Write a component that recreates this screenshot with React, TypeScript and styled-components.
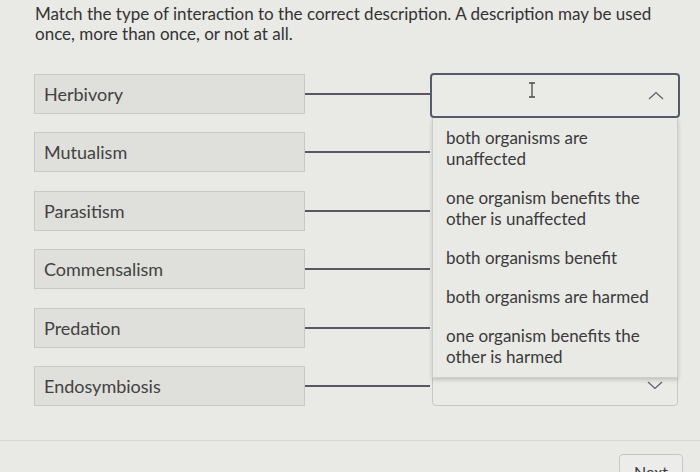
import React from "react";
import styled, { createGlobalStyle } from "styled-components";

const GlobalStyle = createGlobalStyle`
  html, body {
    margin: 0;
    padding: 0;
    background: #e9e9e6;
  }
  body {
    font-family: Lato, "Open Sans", sans-serif;
    color: #363636;
  }
`;

const Page = styled.div`
  width: 700px;
  height: 472px;
  overflow: hidden;
  background: #e9e9e6;
  display: flex;
  flex-direction: column;
`;

const Prompt = styled.p`
  margin: 0;
  padding: 4px 40px 0 35px;
  font-size: 17px;
  line-height: 19.5px;
  color: #333;
`;

const Rows = styled.div`
  display: flex;
  flex-direction: column;
  gap: 18.4px;
  margin-top: 31px;
  padding-left: 34px;
`;

const Row = styled.div`
  display: flex;
  align-items: center;
  height: 40px;
`;

const Term = styled.div`
  box-sizing: border-box;
  width: 271px;
  height: 40px;
  display: flex;
  align-items: center;
  padding-left: 9px;
  background: #dfdfdc;
  border: 1px solid #c8c8c5;
  font-size: 18px;
  color: #424242;
`;

const Connector = styled.div`
  width: 125px;
  height: 2px;
  background: #5b5666;
`;

const SelectWrap = styled.div`
  position: relative;
  width: 250px;
  height: 40px;
  display: flex;
  align-items: flex-start;
`;

const SelectBox = styled.div<{ $open?: boolean }>`
  box-sizing: border-box;
  flex-shrink: 0;
  width: ${(p) => (p.$open ? "250px" : "246px")};
  margin: ${(p) => (p.$open ? "-1px 0 0" : "0 0 0 2px")};
  height: ${(p) => (p.$open ? "45px" : "40px")};
  border: ${(p) => (p.$open ? "2px solid #555b6b" : "1px solid #c6c6c3")};
  border-radius: 4px;
  background: #eaeae7;
  position: relative;
  display: flex;
  align-items: center;
  justify-content: flex-end;
  padding-right: 14px;
`;

const Cursor = styled.svg`
  position: absolute;
  left: 96px;
  top: 7px;
`;

const Menu = styled.ul`
  position: absolute;
  z-index: 5;
  top: 44px;
  left: 2px;
  width: 246px;
  box-sizing: border-box;
  margin: 0;
  padding: 0 0 1px;
  list-style: none;
  background: #e9e9e6;
  border: 1px solid #cdcdca;
  border-top: none;
  box-shadow: 0 2px 4px rgba(0, 0, 0, 0.18);
`;

const Option = styled.li`
  padding: 9px 20px 9px 13px;
  font-size: 17px;
  line-height: 21px;
  color: #3a3a3a;
`;

const Footer = styled.div`
  margin-top: auto;
  border-top: 1px solid #d6d6d3;
  height: 31px;
  display: flex;
  justify-content: flex-end;
  align-items: flex-start;
  padding: 0 17px 0 0;
`;

const NextButton = styled.button`
  margin-top: 13px;
  width: 64px;
  height: 34px;
  border: 1px solid #c6c6c3;
  border-radius: 4px;
  background: #ececea;
  font-family: Lato, sans-serif;
  font-size: 16px;
  color: #3a3a3a;
  padding: 7px 0 0;
  display: flex;
  justify-content: center;
  align-items: flex-start;
`;

const Chevron = ({ up }: { up?: boolean }) => (
  <svg width="16" height="9" viewBox="0 0 16 9">
    <path
      d={up ? "M1 8 L8 1.5 L15 8" : "M1 1 L8 7.5 L15 1"}
      fill="none"
      stroke="#5a5f6c"
      strokeWidth="1.2"
    />
  </svg>
);

const terms = ["Herbivory", "Mutualism", "Parasitism", "Commensalism", "Predation", "Endosymbiosis"];

const options = [
  "both organisms are unaffected",
  "one organism benefits the other is unaffected",
  "both organisms benefit",
  "both organisms are harmed",
  "one organism benefits the other is harmed",
];

export default function App() {
  return (
    <Page>
      <GlobalStyle />
      <Prompt>
        Match the type of interaction to the correct description. A description may be used once, more than once, or
        not at all.
      </Prompt>
      <Rows>
        {terms.map((t, i) => (
          <Row key={t}>
            <Term>{t}</Term>
            <Connector />
            <SelectWrap>
              <SelectBox $open={i === 0}>
                {i === 0 && (
                  <Cursor width="8" height="16" viewBox="0 0 8 16">
                    <path d="M1 1 H7 M4 1 V15 M1 15 H7" fill="none" stroke="#4a4a4a" strokeWidth="1.3" />
                  </Cursor>
                )}
                {i === 0 ? <Chevron up /> : <Chevron />}
              </SelectBox>
              {i === 0 && (
                <Menu>
                  {options.map((o) => (
                    <Option key={o}>{o}</Option>
                  ))}
                </Menu>
              )}
            </SelectWrap>
          </Row>
        ))}
      </Rows>
      <Footer>
        <NextButton>Next</NextButton>
      </Footer>
    </Page>
  );
}
